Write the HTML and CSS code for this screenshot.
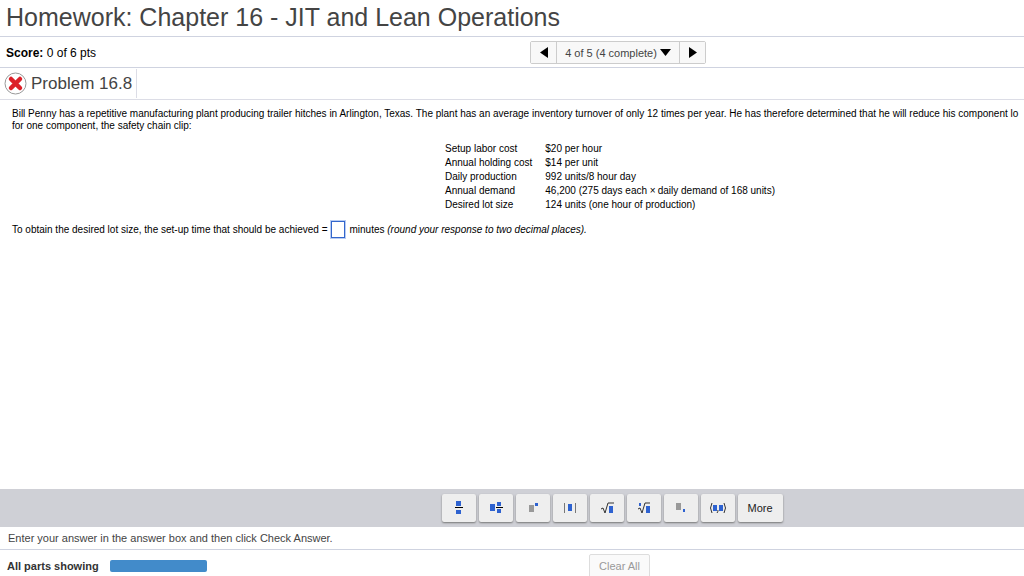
FILE: index.html
```html
<!DOCTYPE html>
<html lang="en">
<head>
    <meta charset="UTF-8">
    <meta name="viewport" content="width=device-width, initial-scale=1.0">
    <title>Homework: Chapter 16 - JIT and Lean Operations</title>
    <link rel="stylesheet" href="styles.css">
</head>
<body>
    <div class="page">
        <header class="title-bar">
            <h1>Homework: Chapter 16 - JIT and Lean Operations</h1>
        </header>

        <div class="score-bar">
            <div class="score"><b>Score:</b> 0 of 6 pts</div>
            <nav class="pager">
                <button type="button" aria-label="Previous question"><svg width="8" height="11" viewBox="0 0 8 11"><path d="M8 0v11L0 5.500z"/></svg></button>
                <button type="button" class="pager-list">4 of 5 (4 complete)<svg width="11" height="7" viewBox="0 0 11 7"><path d="M0 0h11L5.500 7z"/></svg></button>
                <button type="button" aria-label="Next question"><svg width="8" height="11" viewBox="0 0 8 11"><path d="M0 0v11l8-5.500z"/></svg></button>
            </nav>
        </div>

        <div class="problem-bar">
            <div class="problem-tab">
                <svg width="23" height="23" viewBox="0 0 23 23"><circle cx="11.500" cy="11.500" r="10.500" fill="#fff" stroke="#999"/><path d="M7 7l9 9M16 7l-9 9" stroke="#dc2028" stroke-width="4.500" stroke-linecap="round"/></svg>
                <h2>Problem 16.8</h2>
            </div>
        </div>

        <main class="question">
            <p class="intro">Bill Penny has a repetitive manufacturing plant producing trailer hitches in Arlington, Texas. The plant has an average inventory turnover of only 12 times per year. He has therefore determined that he will reduce his component lo<br>for one component, the safety chain clip:</p>

            <table class="facts">
                <tr><th scope="row">Setup labor cost</th><td>$20 per hour</td></tr>
                <tr><th scope="row">Annual holding cost</th><td>$14 per unit</td></tr>
                <tr><th scope="row">Daily production</th><td>992 units/8 hour day</td></tr>
                <tr><th scope="row">Annual demand</th><td>46,200 (275 days each <span class="times">×</span>daily demand of 168 units)</td></tr>
                <tr><th scope="row">Desired lot size</th><td>124 units (one hour of production)</td></tr>
            </table>

            <div class="answer">
                <label for="answer">To obtain the desired lot size, the set-up time that should be achieved =</label>
                <input type="text" id="answer">
                <span>minutes <i>(round your response to two decimal places).</i></span>
            </div>
        </main>

        <div class="palette">
            <button type="button" aria-label="Fraction"><svg width="16" height="14" viewBox="0 0 16 14"><path class="blue" d="M5 0h5v5H5zM5 9h5v4H5z"/><path d="M4 6h8v1H4z"/></svg></button>
            <button type="button" aria-label="Mixed number"><svg width="16" height="14" viewBox="0 0 16 14"><path class="blue" d="M2 3h5v7H2zM9 1h4v4H9zM9 8h4v4H9z"/><path d="M8 6h7v1H8z"/></svg></button>
            <button type="button" aria-label="Exponent"><svg width="16" height="14" viewBox="0 0 16 14"><path class="gray" d="M4 4h5v7H4z"/><path class="blue" d="M10 2h3v3h-3z"/></svg></button>
            <button type="button" aria-label="Absolute value"><svg width="16" height="14" viewBox="0 0 16 14"><path class="dim" d="M2 2h1v10H2zM13 2h1v10h-1z"/><path class="blue" d="M6 3h4v7H6z"/></svg></button>
            <button type="button" aria-label="Square root"><svg width="16" height="14" viewBox="0 0 16 14"><path class="line" d="M2 8l2-1 2 5 3-10h6"/><path class="blue" d="M10 5h4v7h-4z"/></svg></button>
            <button type="button" aria-label="Root"><svg width="16" height="14" viewBox="0 0 16 14"><path class="line" d="M2 8l2-1 2 5 3-10h5"/><path class="blue" d="M10 5h4v7h-4zM3 2h2v3H3z"/></svg></button>
            <button type="button" aria-label="Subscript"><svg width="16" height="14" viewBox="0 0 16 14"><path class="gray" d="M3 2h5v7H3z"/><path class="blue" d="M10 8h2v3h-2z"/></svg></button>
            <button type="button" aria-label="Ordered pair"><svg width="18" height="14" viewBox="0 0 18 14"><path class="line" d="M3 2q-3 5 0 10M15 2q3 5 0 10M9 9q0 2-1 3"/><path class="blue" d="M4 4h4v6H4zM10 4h4v6h-4z"/></svg></button>
            <button type="button" class="more">More</button>
        </div>

        <div class="hint">Enter your answer in the answer box and then click Check Answer.</div>

        <footer class="status">
            <div class="parts">
                <b>All parts showing</b>
                <div class="progress"></div>
            </div>
            <button type="button" class="clear" disabled>Clear All</button>
        </footer>
    </div>
</body>
</html>
```

FILE: styles.css
```css
* {
    box-sizing: border-box;
}
body {
    margin: 0;
    overflow: hidden;
    font-family: "Liberation Sans", Arial, sans-serif;
    font-size: 12px;
    color: #000;
    background: #fff;
}
button {
    font-family: inherit;
    padding: 0;
}
h1, h2, p {
    margin: 0;
    font-weight: normal;
}
/* wider than a small window, the right side runs off */
.page {
    display: flex;
    flex-direction: column;
    min-width: 1224px;
    height: 100vh;
}
.title-bar {
    padding: 2px 6px 4px;
    border-bottom: 1px solid #cfd3e0;
}
.title-bar h1 {
    font-size: 25px;
    line-height: 30px;
    color: #444;
}
.score-bar {
    display: grid;
    grid-template-columns: 1fr auto 1fr;
    align-items: center;
    padding: 4px 0 3px 12px;
    border-bottom: 1px solid #cfd3e0;
}
.score {
    margin-left: -6px;
}
.pager {
    display: flex;
    border: 1px solid #ccc;
    border-radius: 2px;
}
.pager button {
    display: flex;
    align-items: center;
    justify-content: center;
    width: 25px;
    height: 21px;
    border: 0;
    background: #f8f8f8;
}
.pager .pager-list {
    gap: 3px;
    width: 124px;
    font-size: 11px;
    color: #444;
    border: solid #ccc;
    border-width: 0 1px;
}
.problem-bar {
    display: flex;
    padding: 1px 0;
    border-bottom: 1px solid #dcdde6;
}
.problem-tab {
    display: flex;
    align-items: center;
    gap: 4px;
    height: 29px;
    padding: 0 4px;
    border-right: 1px solid #dcdde6;
}
.problem-tab h2 {
    font-size: 17px;
    color: #444;
}
.question {
    flex: 1;
    padding: 8px 16px 0 12px;
    font-size: 10px;
    line-height: 12px;
    white-space: nowrap;
}
.facts {
    margin: 10px auto 9px;
    border-collapse: collapse;
    line-height: 14px;
}
.facts th {
    padding: 0 13px 0 0;
    font-weight: normal;
    text-align: left;
}
.facts td {
    padding: 0;
}
.times {
    margin-right: 2px;
}
.answer {
    display: flex;
    align-items: center;
    gap: 4px;
}
.answer input {
    width: 14px;
    height: 17px;
    padding: 0;
    border: 1px solid #3366cc;
    outline: 1px solid #b8ccf2;
    font-size: 10px;
}
.palette {
    display: flex;
    justify-content: center;
    gap: 3px;
    padding: 5px 0;
    background: #cfd0d6;
}
.palette button {
    display: flex;
    align-items: center;
    justify-content: center;
    width: 34px;
    height: 28px;
    border: 0;
    border-radius: 2px;
    background: #eee;
    box-shadow: 0 1px 2px #777;
}
.palette .more {
    width: 45px;
    font-size: 11px;
    color: #222;
}
.blue {
    fill: #2e62d0;
}
.gray {
    fill: #999;
}
.dim {
    fill: #777;
}
.line {
    fill: none;
    stroke: #333;
}
.hint {
    padding: 3px 8px;
    font-size: 11px;
    line-height: 16px;
    color: #444;
    border-bottom: 1px solid #cfd3e0;
}
.status {
    display: grid;
    grid-template-columns: 1fr auto 1fr;
    align-items: start;
    height: 26px;
    padding: 4px 0 0 15px;
    overflow: hidden;
}
.parts {
    display: flex;
    align-items: center;
    gap: 11px;
    height: 24px;
    margin-left: -8px;
    font-size: 11px;
    color: #333;
}
.progress {
    width: 97px;
    height: 12px;
    border-radius: 2px;
    background: #428bca;
}
.clear {
    width: 61px;
    height: 24px;
    border: 1px solid #ddd;
    border-radius: 2px;
    background: #fafafa;
    font-size: 11px;
    color: #999;
}
```
